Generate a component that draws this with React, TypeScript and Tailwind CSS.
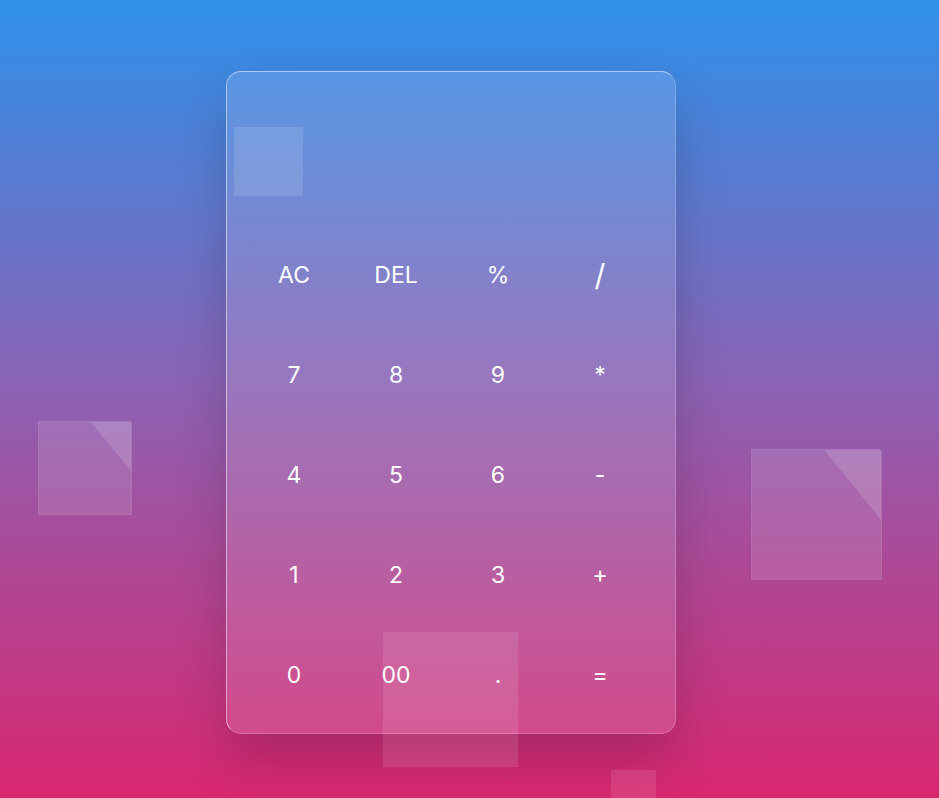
import React from "react";

const keys = ["AC", "DEL", "%", "/", "7", "8", "9", "*", "4", "5", "6", "-", "1", "2", "3", "+", "0", "00", ".", "="];

export default function App() {
  return (
    <div className="relative h-[798px] w-full overflow-hidden bg-[linear-gradient(180deg,#2e90ea_0%,#8a63b4_48%,#d8276f_100%)] pl-[226px] pt-[71px] [font-family:Inter,'Noto_Sans',sans-serif]">
      {/* left square */}
      <div className="absolute left-[38px] top-[421px] h-[94px] w-[94px] overflow-hidden rounded-tr-[3px] border border-white/[0.06] bg-white/[0.12]">
        <div className="absolute inset-0 bg-white/[0.14] [clip-path:polygon(56%_0,100%_0,100%_53%)]" />
      </div>
      {/* right square */}
      <div className="absolute left-[751px] top-[449px] h-[131px] w-[131px] overflow-hidden rounded-tr-[4px] border border-white/[0.06] bg-white/[0.12]">
        <div className="absolute inset-0 bg-white/[0.14] [clip-path:polygon(56%_0,100%_0,100%_54%)]" />
      </div>

      <div className="relative h-[663px] w-[450px] rounded-[15px] border border-b-white/20 border-l-white/50 border-r-white/20 border-t-white/50 bg-white/[0.13] pl-[16px] pt-[153px] shadow-[0_25px_50px_rgba(0,0,0,0.18)]">
        <div className="grid grid-cols-[repeat(4,102px)] grid-rows-[repeat(5,100px)]">
          {keys.map((k) => (
            <div key={k} className="flex items-center justify-center text-[23px] font-normal leading-none text-white">
              {k === "/" ? <span className="text-[30px]">/</span> : k}
            </div>
          ))}
        </div>
      </div>

      {/* square inside card */}
      <div className="absolute left-[234px] top-[127px] h-[69px] w-[69px] bg-white/[0.12]" />
      {/* bottom square */}
      <div className="absolute left-[383px] top-[632px] h-[135px] w-[135px] bg-white/[0.1]" />
      {/* bottom right square */}
      <div className="absolute left-[611px] top-[770px] h-[45px] w-[45px] bg-white/[0.1]" />
    </div>
  );
}
